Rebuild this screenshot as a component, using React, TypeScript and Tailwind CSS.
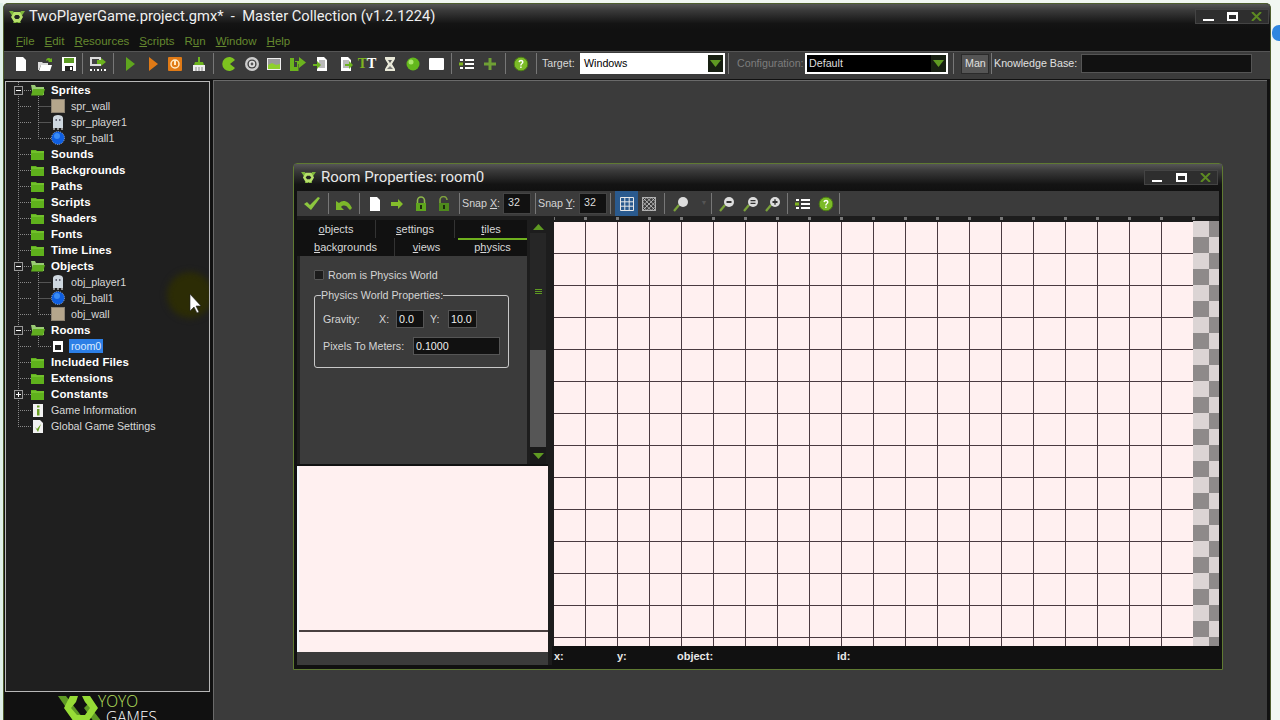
import React from "react";

const G = "#6cb31e";

function Ic({ children, w = 16, h = 16 }: { children: React.ReactNode; w?: number; h?: number }) {
  return (
    <svg width={w} height={h} viewBox={`0 0 ${w} ${h}`} className="block shrink-0">
      {children}
    </svg>
  );
}

const Page = () => (
  <Ic>
    <path d="M3 1h7l3 3v11H3z" fill="#fff" />
  </Ic>
);
const OpenI = () => (
  <Ic>
    <path d="M1 6h4l1 1h5v2H4l-2 5H1z" fill="#ddd" />
    <path d="M4 9h11l-2 6H2z" fill="#fff" />
    <path d="M9 5c0-3 3-4 5-2l1-1v4h-4l1-1c-1-1-2-1-3 0z" fill={G} />
  </Ic>
);
const Save = () => (
  <Ic>
    <path d="M1 1h14v14H1z" fill="#fff" />
    <path d="M3 2h10v5H3z" fill="#5b9a22" />
    <path d="M4 10h8v5H4z" fill="#222" />
    <path d="M9 11h2v3H9z" fill="#fff" />
  </Ic>
);
const Exe = () => (
  <Ic w={18}>
    <path d="M1 1h11v9H1z" fill="#ddd" />
    <path d="M3 3h7v5H3z" fill="#444" />
    <path d="M8 4h4V2l5 4-5 4V8H8z" fill={G} />
    <path d="M1 13h2v2H1zM5 13h1v2H5zM8 13h2v2H8zM12 13h1v2h-1zM15 13h2v2h-2z" fill="#fff" />
  </Ic>
);
const Play = ({ c }: { c: string }) => (
  <Ic>
    <path d="M4 1l9 7-9 7z" fill={c} />
  </Ic>
);
const Stop = () => (
  <Ic>
    <rect x="1" y="1" width="14" height="14" rx="1" fill="#e07a16" />
    <circle cx="8" cy="8" r="4" fill="none" stroke="#ffe9c4" strokeWidth="1.5" />
    <path d="M7 4h2v5H7z" fill="#ffe9c4" />
  </Ic>
);
const Broom = () => (
  <Ic>
    <path d="M7 1h2v6H7z" fill={G} />
    <path d="M4 6h8l1 3H3z" fill={G} />
    <path d="M2 9h12v6H2z" fill="#eee" />
    <path d="M5 11v4M8 11v4M11 11v4" stroke="#888" />
  </Ic>
);
const Pac = () => (
  <Ic>
    <path d="M14 4A7 7 0 1 0 14 12L9 8z" fill="#7dc31f" />
  </Ic>
);
const Target = () => (
  <Ic>
    <circle cx="8" cy="8" r="7" fill="#ccc" />
    <circle cx="8" cy="8" r="4.6" fill="#444" />
    <circle cx="8" cy="8" r="3.2" fill="#ddd" />
    <circle cx="8" cy="8" r="1.4" fill="#555" />
  </Ic>
);
const Pic = () => (
  <Ic>
    <path d="M1 2h14v12H1z" fill="#eee" />
    <path d="M2 3h12v6H2z" fill="#999" />
    <path d="M2 9l4-2 4 2 4-1v5H2z" fill="#8ed02c" />
  </Ic>
);
const PathI = () => (
  <Ic w={18}>
    <path d="M1 15V2h4v9h3V6H6V5h4V1l7 5.500L10 12V8H9.500v7H1z" fill="#6cb31e" />
  </Ic>
);
const Script = ({ flip }: { flip?: boolean }) => (
  <Ic>
    <path d="M4 1h7l3 3v11H4z" fill="#fff" />
    <path d="M6 5h6M6 7h6M6 9h6M6 11h6" stroke="#777" />
    {flip ? (
      <path d="M8 8h4V5l4 4-4 4v-3H8z" fill={G} />
    ) : (
      <path d="M0 8h4V5l4 4-4 4v-3H0z" fill={G} />
    )}
  </Ic>
);
const Hour = () => (
  <Ic>
    <path d="M3 1h10v2l-3 5 3 5v2H3v-2l3-5-3-5z" fill="#e8e8d8" />
    <path d="M6 4h4L8 7z" fill="#555" />
    <path d="M8 10l3 3H5z" fill="#777" />
  </Ic>
);
const Ball = () => (
  <Ic>
    <circle cx="8" cy="8" r="6.5" fill="#63b81c" />
    <circle cx="6" cy="6" r="2.5" fill="#a9e76a" />
  </Ic>
);
const ListI = () => (
  <Ic>
    <path d="M1 3h3v2H1zM1 11h3v2H1z" fill="#fff" />
    <path d="M0 6.500h4v3H0z" fill="#7fb321" />
    <path d="M6 3h9v2H6zM6 7h9v2H6zM6 11h9v2H6z" fill="#fff" />
  </Ic>
);
const Plus = () => (
  <Ic>
    <path d="M6.500 2h3v4.500h4.500v3H9.500V14h-3V9.500H2v-3h4.500z" fill="#6f9f35" />
  </Ic>
);
const Help = () => (
  <Ic>
    <circle cx="8" cy="8" r="6.800" fill="#7cbb28" />
    <circle cx="8" cy="8" r="6.800" fill="none" stroke="#4c7d14" />
    <path d="M5.500 6c0-3 5-3 5 0 0 2-2 1.800-2 3.500H7.200C7.200 7.500 9 7.500 9 6c0-1-2-1-2 0.200z" fill="#fff" />
    <path d="M7.200 10.500h1.400V12H7.200z" fill="#fff" />
  </Ic>
);
const Check = () => (
  <Ic>
    <path d="M0 8l3-2 3 3 8-8 2 1-9 12z" fill="#8cc63f" />
  </Ic>
);
const Undo = () => (
  <Ic w={18}>
    <path d="M1 5v9h8L6 11c2-2 5-2 7 1l2 2 2-2c-3-7-9-9-13-5z" fill="#7cb82a" />
  </Ic>
);
const Arrow = () => (
  <Ic>
    <path d="M2 6h7V3l5 5-5 5v-3H2z" fill="#85bd2b" />
  </Ic>
);
const Lock = ({ open }: { open?: boolean }) => (
  <Ic>
    <path
      d={open ? "M4 7V4a3.500 3.500 0 0 1 7 0" : "M4.500 7V4.500a3.500 3.500 0 0 1 7 0V7"}
      fill="none"
      stroke={open ? "#7ea03e" : "#8db84a"}
      strokeWidth="1.600"
    />
    <path d="M3 7h10v8H3z" fill={open ? "#4e8a1c" : "#5fa51e"} />
    <path d="M7 9h2v4H7z" fill="#1c2a0c" />
  </Ic>
);
const GridI = () => (
  <Ic w={14} h={14}>
    <path d="M.5.500h13v13H.500zM4.800.500v13M9.200.500v13M.500 4.800h13M.500 9.200h13" fill="none" stroke="#e8e8e8" />
  </Ic>
);
const CrossI = () => (
  <Ic w={14} h={14}>
    <path d="M.5.500h13v13H.500zM.500 4.800L4.800.500M.500 9.200L9.200.500M.500 13.500l13-13M4.800 13.500l8.700-8.700M9.200 13.500l4.300-4.300M.500 4.800l8.700 8.700M.500 9.200l4.300 4.300M.500.500l13 13M4.800.500l8.700 8.700M9.200.500l4.300 4.300" fill="none" stroke="#ccc" strokeWidth=".8" />
  </Ic>
);
const Zoom = ({ s }: { s?: string }) => (
  <Ic>
    <path d="M1 15l5-6" stroke="#7aa23a" strokeWidth="2.200" />
    <circle cx="10" cy="6" r="5" fill="#ddd" />
    {s === "-" && <path d="M7.500 5h5v2h-5z" fill="#333" />}
    {s === "=" && <path d="M7.500 4h5v1.300h-5zM7.500 6.700h5V8h-5z" fill="#333" />}
    {s === "+" && <path d="M7.500 5H9.300V3.200h1.400V5h1.800v2h-1.800v1.800H9.300V7H7.500z" fill="#333" />}
  </Ic>
);
const Gm = ({ s = 16 }: { s?: number }) => (
  <svg width={s} height={s - 2} viewBox="0 0 16 14" className="block shrink-0">
    <path d="M0 1h4l8 12H8zM16 1h-4L4 13h4z" fill="#7db53a" />
    <path d="M5 2h6l3 5-3 5H5L2 7z" fill="#b7e06a" />
    <path d="M6.500 5h3L11 7 9.500 9h-3L5 7z" fill="#222" />
  </svg>
);

function Sep({ ml = 0 }: { ml?: number }) {
  return <span style={{ marginLeft: ml }} className="w-px h-[21px] bg-[#777] shrink-0" />;
}
function Cell({ children, w = 23 }: { children: React.ReactNode; w?: number }) {
  return (
    <span style={{ width: w }} className="h-full flex items-center justify-center shrink-0">
      {children}
    </span>
  );
}

const Folder = ({ open }: { open?: boolean }) =>
  open ? (
    <g>
      <path d="M31 3h4l1 2h8v8H33z" fill="#9acb74" />
      <path d="M33 7h12l-2 6.500H31z" fill="#60ad20" />
    </g>
  ) : (
    <g>
      <path d="M31 4h5l1 1h7v9H31z" fill="#5fb11c" />
      <path d="M31 6h13" stroke="#86cf3d" />
    </g>
  );

function ItemIcon({ kind }: { kind: string }) {
  if (kind === "wall")
    return (
      <g>
        <rect x="51.500" y="1.500" width="13" height="13" fill="#b5a68c" stroke="#8d8373" />
      </g>
    );
  if (kind === "player")
    return (
      <g>
        <path d="M53 4c0-4 10-4 10 0v10H53z" fill="#cfd8e0" />
        <path d="M54 14v2M58 14v2M62 14v2" stroke="#fff" />
        <path d="M55.500 5h1.500v2h-1.500zM59 5h1.500v2H59z" fill="#667" />
      </g>
    );
  if (kind === "ball")
    return (
      <g>
        <circle cx="58" cy="8" r="6.500" fill="#0f5ee0" stroke="#d8e6f8" strokeDasharray="1 1" strokeWidth=".6" />
        <circle cx="57" cy="6" r="3" fill="#3a8cf5" />
      </g>
    );
  if (kind === "room")
    return (
      <g>
        <path d="M53 3h10v11H53z" fill="#fff" />
        <path d="M55 7h6v5h-6z" fill="#222" />
      </g>
    );
  return null;
}

type R = { t: string; k: string; last?: boolean };
const rows: R[] = [
  { t: "Sprites", k: "open" },
  { t: "spr_wall", k: "wall" },
  { t: "spr_player1", k: "player" },
  { t: "spr_ball1", k: "ball", last: true },
  { t: "Sounds", k: "f" },
  { t: "Backgrounds", k: "f" },
  { t: "Paths", k: "f" },
  { t: "Scripts", k: "f" },
  { t: "Shaders", k: "f" },
  { t: "Fonts", k: "f" },
  { t: "Time Lines", k: "f" },
  { t: "Objects", k: "open" },
  { t: "obj_player1", k: "player" },
  { t: "obj_ball1", k: "ball" },
  { t: "obj_wall", k: "wall", last: true },
  { t: "Rooms", k: "open" },
  { t: "room0", k: "room", last: true },
  { t: "Included Files", k: "f" },
  { t: "Extensions", k: "f" },
  { t: "Constants", k: "plus" },
  { t: "Game Information", k: "info" },
  { t: "Global Game Settings", k: "gear" },
];

const dot = { stroke: "#8a8a8a", strokeDasharray: "1 1", fill: "none" };

function TreeRow({ r }: { r: R }) {
  const child = ["wall", "player", "ball", "room"].includes(r.k);
  const width = child ? 65 : 45;
  const expand = r.k === "open" || r.k === "plus";
  return (
    <div className="flex h-4 items-center">
      <svg width={width} height={16} viewBox={`6 0 ${width} 16`} className="block shrink-0">
        <path d={r.t === "Global Game Settings" ? "M18.500 0v8" : "M18.500 0v16"} {...dot} />
        <path d="M18 8.500h13" {...dot} />
        {child && <path d={r.last ? "M38.500 0v8.500H51" : "M38.500 0v16M38.500 8.500H51"} {...dot} />}
        {r.k === "open" && <path d="M38.500 12v4" {...dot} />}
        {expand && (
          <g>
            <rect x="14.500" y="4.500" width="8" height="8" fill="#222" stroke="#999" />
            <path d="M16 8.500h5" stroke="#fff" />
            {r.k === "plus" && <path d="M18.500 6v5" stroke="#fff" />}
          </g>
        )}
        {r.k === "open" && <Folder open />}
        {(r.k === "f" || r.k === "plus") && <Folder />}
        {r.k === "info" && (
          <g>
            <path d="M33 2h10v13H33z" fill="#f2f2f2" />
            <path d="M37 3.500h2.500v2H37zM37 7h2.500v6.500H37z" fill="#6a9f22" />
          </g>
        )}
        {r.k === "gear" && (
          <g>
            <path d="M33 2h7l3 3v10H33z" fill="#f2f2f2" />
            <path d="M35 9l2 2 4-5-3 8z" fill="#6a9f22" />
          </g>
        )}
        {child && <ItemIcon kind={r.k} />}
      </svg>
      {r.k === "room" ? (
        <span className="-ml-[2px] px-[2px] bg-[#2d7fe6] text-[#dcecff] text-[10.700px] leading-[14px]">{r.t}</span>
      ) : (
        <span
          className={
            r.k === "open" || r.k === "f" || r.k === "plus"
              ? "mt-px text-white font-bold text-[11.500px] leading-[15px] tracking-[0.100px]"
              : "text-[#d8d8d8] text-[10.700px]"
          }
        >
          {r.t}
        </span>
      )}
    </div>
  );
}

const Arrowdown = () => (
  <span className="w-[15px] h-full bg-[#182012] flex items-center justify-center shrink-0">
    <svg width="11" height="7" viewBox="0 0 11 7" className="block">
      <path d="M0 0h11L5.500 7z" fill="#5f9a22" />
    </svg>
  </span>
);

const titleBg = "bg-[linear-gradient(#565656,#3a3a3a_25%,#141414_75%,#111)]";

export default function App() {
  return (
    <div className="relative w-[1280px] h-[720px] overflow-hidden bg-[#f1f7f2] font-['Liberation_Sans',sans-serif] text-[10.700px] text-[#d4d4d4]">
      <div className="absolute left-[1272px] top-[25px] w-[14px] h-[16px] rounded-full bg-[#2f86e0]" />
      <div className="absolute left-0 top-[3px] w-[3px] h-[717px] bg-[#dff0e8]" />
      <div className="relative ml-[3px] mt-[3px] w-[1268px] h-[717px] flex flex-col bg-[#111] border border-b-0 border-[#4e5e2e] rounded-t-[5px] overflow-hidden">
        {/* title */}
        <div className={`h-[26px] shrink-0 flex items-center ${titleBg}`}>
          <span className="ml-[5px] mr-[4px]">
            <Gm s={16} />
          </span>
          <span className="font-['Roboto',sans-serif] text-[14.700px] text-[#f0f0f0] whitespace-pre mb-px">
            TwoPlayerGame.project.gmx*  -  Master Collection (v1.2.1224)
          </span>
          <div className="ml-auto mr-px mb-[2px] flex h-[15px] w-[74px] border border-[#444] bg-[#2e2e2e]">
            <span className="w-[24px] flex justify-center items-end pb-[2px]">
              <span className="w-[11px] h-[2px] bg-white" />
            </span>
            <span className="w-[24px] flex justify-center items-center">
              <span className="w-[11px] h-[9px] border-2 border-t-[3px] border-white" />
            </span>
            <span className="w-[24px] flex justify-center items-center">
              <svg width="11" height="9" viewBox="0 0 11 9" className="block">
                <path d="M1 0l9 9M10 0L1 9" stroke="#5d8a22" strokeWidth="2" />
              </svg>
            </span>
          </div>
        </div>
        {/* menu */}
        <div className="h-[21px] shrink-0 flex items-center pl-[12px] pt-[2px] gap-[10px] text-[#65892f] text-[11.500px]">
          <span><u>F</u>ile</span>
          <span><u>E</u>dit</span>
          <span><u>R</u>esources</span>
          <span><u>S</u>cripts</span>
          <span>R<u>u</u>n</span>
          <span><u>W</u>indow</span>
          <span><u>H</u>elp</span>
        </div>
        {/* toolbar */}
        <div className="h-[28px] shrink-0 flex items-center bg-[#3b3b3b] border-t border-[#555] pl-[5px] pb-[4px]">
          <Cell w={24}><Page /></Cell>
          <Cell w={24}><OpenI /></Cell>
          <Cell w={24}><Save /></Cell>
          <Sep ml={1} />
          <Cell w={30}><Exe /></Cell>
          <Sep />
          <Cell w={31}><Play c="#5fa51e" /></Cell>
          <Cell w={15}><Play c="#e07a16" /></Cell>
          <Cell w={30}><Stop /></Cell>
          <Cell w={17}><Broom /></Cell>
          <Sep ml={6} />
          <Cell w={30}><Pac /></Cell>
          <Cell w={16}><Target /></Cell>
          <Cell w={28}><Pic /></Cell>
          <Cell w={20}><PathI /></Cell>
          <Cell w={26}><Script /></Cell>
          <Cell w={22}><Script flip /></Cell>
          <Cell w={22}>
            <span className="font-['Liberation_Serif',serif] font-bold text-[14px] leading-none">
              <span className="text-[#7fb321]">T</span>
              <span className="text-white">T</span>
            </span>
          </Cell>
          <Cell w={24}><Hour /></Cell>
          <Cell w={22}><Ball /></Cell>
          <Cell w={24}>
            <span className="block w-[15px] h-[12px] bg-white rounded-[1px]" />
          </Cell>
          <Sep ml={3} />
          <Cell w={30}><ListI /></Cell>
          <Cell w={16}><Plus /></Cell>
          <Sep ml={7} />
          <Cell w={30}><Help /></Cell>
          <Sep />
          <span className="ml-[5px] w-[38px] text-[#d8d8d8]">Target:</span>
          <div className="w-[145px] h-[21px] border-2 border-white bg-white text-black flex items-center pl-[2px] justify-between">
            <span>Windows</span>
            <Arrowdown />
          </div>
          <Sep ml={3} />
          <span className="ml-[8px] w-[68px] text-[#7d7d7d] whitespace-nowrap">Configuration:</span>
          <div className="w-[143px] h-[21px] border-2 border-white bg-black text-[#ddd] flex items-center pl-[2px] justify-between">
            <span>Default</span>
            <Arrowdown />
          </div>
          <Sep ml={5} />
          <span className="ml-[7px] w-[28px] h-[20px] bg-[#555] border border-[#2b2b2b] overflow-hidden flex items-center pl-[3px] text-[#e0e0e0] whitespace-nowrap">
            Man
          </span>
          <Sep ml={2} />
          <span className="ml-[2px] w-[87px] text-[#e0e0e0] whitespace-nowrap">Knowledge Base:</span>
          <span className="w-[171px] h-[19px] bg-[#111] border border-[#555]" />
        </div>
        {/* body */}
        <div className="flex-1 flex min-h-0">
          <div className="w-[207px] shrink-0 flex flex-col pl-px">
            <div className="relative overflow-hidden mt-[2px] h-[611px] w-[205px] shrink-0 border border-[#b8b8b8] bg-[#1f1f1f]">
              <div className="absolute left-[161px] top-[190px] w-[46px] h-[46px] rounded-full bg-[#2c2c05] blur-[3px]" />
              <div className="relative">
                {rows.map((r) => (
                  <TreeRow key={r.t} r={r} />
                ))}
              </div>
            </div>
            <div className="flex items-start pl-[53px] pt-[2px]">
              <svg width="44" height="26" viewBox="0 0 44 26" className="block shrink-0 mt-px">
                <path d="M0 1h8l20 26H18z" fill="#5f9a25" />
                <path d="M44 27h-8L26 13l4-4z" fill="#5f9a25" />
                <path d="M12 1h8l-2 6-5 6 6 7h8l5-7-5-6-3-6h8l8 12-10 14H16L6 13z" fill="#97dc36" />
              </svg>
              <div className="-ml-[4px] font-['Open_Sans',sans-serif] font-light text-[15.500px] leading-[15px]">
                <div className="text-[#b9e35e]">YOYO</div>
                <div className="ml-[8px] mt-px text-white">GAMES</div>
              </div>
            </div>
          </div>
          {/* MDI */}
          <div className="relative flex-1 ml-[2px] mt-px mr-[3px] bg-[#3b3b3b] border-l border-t border-[#6a6a6a]">
            {/* Room window */}
            <div className="absolute left-[79px] top-[82px] w-[930px] h-[507px] flex flex-col border border-[#5f7a32] rounded-t-[4px] bg-[#111] px-[3px] pb-[4px]">
              <div className={`-mx-[3px] h-[27px] shrink-0 flex items-center ${titleBg}`}>
                <span className="ml-[7px] mr-[5px]"><Gm s={15} /></span>
                <span className="font-['Roboto',sans-serif] text-[15px] text-[#e8e8e8]">Room Properties: room0</span>
                <div className="ml-auto mr-[4px] flex items-center h-[15px] w-[74px] border border-[#444] bg-[#2e2e2e]">
                  <span className="w-[24px] h-full flex justify-center items-end pb-[2px]">
                    <span className="w-[10px] h-[2px] bg-white" />
                  </span>
                  <span className="w-[24px] flex justify-center">
                    <span className="w-[11px] h-[9px] border-2 border-t-[3px] border-white" />
                  </span>
                  <span className="w-[24px] flex justify-center">
                    <svg width="11" height="9" viewBox="0 0 11 9" className="block">
                      <path d="M1 0l9 9M10 0L1 9" stroke="#5d8a22" strokeWidth="2" />
                    </svg>
                  </span>
                </div>
              </div>
              <div className="h-[25px] shrink-0 flex items-center bg-[#3b3b3b] pl-px">
                <Cell w={28}><Check /></Cell>
                <Sep ml={2} />
                <Cell w={30}><Undo /></Cell>
                <Sep />
                <Cell w={30}><Page /></Cell>
                <Cell w={14}><Arrow /></Cell>
                <Cell w={34}><Lock /></Cell>
                <Cell w={12}><Lock open /></Cell>
                <Sep ml={9} />
                <span className="ml-[2px] w-[41px] whitespace-nowrap">Snap <u>X</u>:</span>
                <span className="w-[28px] h-[21px] bg-[#111] border border-[#444] pl-[4px] text-[#ddd]">32</span>
                <Sep ml={4} />
                <span className="ml-[2px] w-[41px] whitespace-nowrap">Snap <u>Y</u>:</span>
                <span className="w-[28px] h-[21px] bg-[#111] border border-[#444] pl-[4px] text-[#ddd]">32</span>
                <Sep ml={3} />
                <span className="ml-[4px] w-[23px] h-[25px] bg-[#2a5a8e] flex items-center justify-center"><GridI /></span>
                <Cell w={22}><CrossI /></Cell>
                <Sep ml={4} />
                <Cell w={32}><Zoom /></Cell>
                <span className="text-[#555] text-[7px] w-[14px] text-center">▼</span>
                <Sep />
                <Cell w={30}><Zoom s="-" /></Cell>
                <Cell w={18}><Zoom s="=" /></Cell>
                <Cell w={26}><Zoom s="+" /></Cell>
                <Sep ml={1} />
                <Cell w={30}><ListI /></Cell>
                <Cell w={16}><Help /></Cell>
                <Sep ml={5} />
              </div>
              <div className="flex-1 min-h-0 flex">
                {/* left panel */}
                <div className="w-[251px] shrink-0 flex flex-col">
                  <div className="h-[248px] flex shrink-0 pt-[4px] bg-[#1d1d1d]">
                    <div className="w-[230px] flex flex-col text-[11px]">
                      <div className="h-[18px] flex bg-[#111] text-[#d8d8d8] text-center">
                        <span className="w-[78px] leading-[18px]"><u>o</u>bjects</span>
                        <span className="w-[79px] border-l border-[#333] leading-[18px]"><u>s</u>ettings</span>
                        <span className="w-[73px] border-l border-[#333] leading-[18px]"><u>t</u>iles</span>
                      </div>
                      <div className="h-[18px] flex bg-[#111] text-[#d8d8d8] text-center">
                        <span className="w-[97px] leading-[18px]"><u>b</u>ackgrounds</span>
                        <span className="w-[64px] border-l border-[#333] leading-[18px]"><u>v</u>iews</span>
                        <span className="w-[69px] border-t-2 border-[#6fb01e] leading-[15px]">p<u>h</u>ysics</span>
                      </div>
                      <div className="flex-1 ml-[3px] bg-[#3b3b3b] pl-[14px] pt-[11px] text-[10.700px]">
                        <label className="flex items-center gap-[4px] h-[16px]">
                          <span className="w-[10px] h-[10px] bg-[#1c1c1c] border border-[#555] rounded-[1px]" />
                          <span>Room is Physics World</span>
                        </label>
                        <fieldset className="mt-[5px] w-[195px] h-[80px] border border-[#c8c8c8] rounded-[3px] pl-[8px]">
                          <legend className="ml-[-2px] px-0 leading-[14px]">Physics World Properties:</legend>
                          <div className="flex items-center h-[18px] mt-[8px]">
                            <span className="w-[56px]">Gravity:</span>
                            <span className="w-[17px]">X:</span>
                            <span className="w-[28px] h-[18px] bg-[#111] border border-[#555] pl-[2px] leading-[16px] text-[#eee]">0.0</span>
                            <span className="ml-[6px] w-[18px]">Y:</span>
                            <span className="w-[29px] h-[18px] bg-[#111] border border-[#555] pl-[2px] leading-[16px] text-[#eee]">10.0</span>
                          </div>
                          <div className="flex items-center h-[18px] mt-[9px]">
                            <span className="w-[90px] whitespace-nowrap">Pixels To Meters:</span>
                            <span className="w-[87px] h-[18px] bg-[#111] border border-[#555] pl-[2px] leading-[16px] text-[#eee]">0.1000</span>
                          </div>
                        </fieldset>
                      </div>
                    </div>
                    <div className="ml-[3px] w-[16px] h-[244px] flex flex-col">
                      <div className="h-[13px] flex items-center justify-center">
                        <svg width="11" height="6" viewBox="0 0 11 6" className="block"><path d="M0 6h11L5.500 0z" fill="#5f9a22" /></svg>
                      </div>
                      <div className="h-[117px] bg-[#262626] flex items-center justify-center">
                        <svg width="7" height="6" viewBox="0 0 7 6" className="block"><path d="M0 .500h7M0 2.500h7M0 4.500h7" stroke="#5f9a22" /></svg>
                      </div>
                      <div className="h-[97px] bg-[#565656]" />
                      <div className="flex-1 bg-[#1a1a1a] flex items-center justify-center">
                        <svg width="11" height="6" viewBox="0 0 11 6" className="block"><path d="M0 0h11L5.500 6z" fill="#5f9a22" /></svg>
                      </div>
                    </div>
                  </div>
                  <div className="mt-[2px] h-[186px] shrink-0 bg-[#fff0f0] border-l-[2px] border-[#f4fbff] flex flex-col">
                    <div className="h-[164px]" />
                    <div className="h-[2px] bg-[#4a4040]" />
                  </div>
                  <div className="flex-1 bg-[#3b3b3b]" />
                </div>
                {/* room canvas */}
                <div className="flex-1 min-w-0 flex flex-col bg-[#1d1d1d] pl-[6px]">
                  <div className="h-[5px] shrink-0 pt-px">
                    <div className="h-[3px] bg-[linear-gradient(to_right,#777_3px,transparent_3px)] bg-[size:32px_100%] bg-[position:30px_0]" />
                  </div>
                  <div className="h-[425px] shrink-0 flex overflow-hidden">
                    <div className="mt-px w-[639px] bg-[#fff0f0] bg-[linear-gradient(to_right,#4a3a40_1px,transparent_1px),linear-gradient(to_bottom,#4a3a40_1px,transparent_1px)] bg-[size:32px_32px] bg-[position:31px_31px]" />
                    <div className="w-[26px] bg-[repeating-conic-gradient(#8e8a8a_0_25%,#dbd4d4_0_50%)] bg-[size:32px_32px]" />
                  </div>
                  <div className="flex-1 -ml-[2px] pl-[2px] pt-px bg-[#111] flex items-center font-bold text-[11px] text-[#e8e8e8]">
                    <span className="w-[63px]">x:</span>
                    <span className="w-[60px]">y:</span>
                    <span className="w-[160px]">object:</span>
                    <span>id:</span>
                  </div>
                </div>
              </div>
            </div>
          </div>
        </div>
      </div>
      <svg width="14" height="20" viewBox="0 0 14 20" className="absolute left-[189px] top-[294px]">
        <path d="M1 0v17l4-4 3 6 2-1-3-6h5z" fill="#fff" stroke="#222" strokeWidth=".6" />
      </svg>
    </div>
  );
}
